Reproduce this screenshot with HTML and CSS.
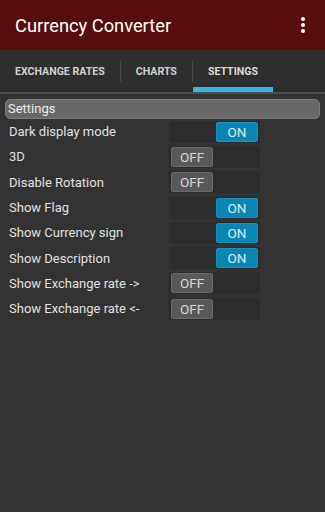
FILE: index.html
```html
<!DOCTYPE html>
<html lang="en">
<head>
    <meta charset="UTF-8">
    <meta name="viewport" content="width=device-width, initial-scale=1.0">
    <title>Currency Converter</title>
    <link rel="stylesheet" href="styles.css">
</head>
<body>

    <header class="appbar">
        <h1>Currency Converter</h1>
        <div class="menu-dots">
            <span></span><span></span><span></span>
        </div>
    </header>

    <nav class="tabs">
        <div class="tab">EXCHANGE RATES</div>
        <div class="sep"></div>
        <div class="tab">CHARTS</div>
        <div class="sep"></div>
        <div class="tab active">SETTINGS</div>
    </nav>

    <main class="settings">
        <div class="section-title">Settings</div>

        <div class="row">
            <span class="label">Dark display mode</span>
            <div class="switch on"><span class="knob">ON</span></div>
        </div>
        <div class="row">
            <span class="label">3D</span>
            <div class="switch"><span class="knob">OFF</span></div>
        </div>
        <div class="row">
            <span class="label">Disable Rotation</span>
            <div class="switch"><span class="knob">OFF</span></div>
        </div>
        <div class="row">
            <span class="label">Show Flag</span>
            <div class="switch on"><span class="knob">ON</span></div>
        </div>
        <div class="row">
            <span class="label">Show Currency sign</span>
            <div class="switch on"><span class="knob">ON</span></div>
        </div>
        <div class="row">
            <span class="label">Show Description</span>
            <div class="switch on"><span class="knob">ON</span></div>
        </div>
        <div class="row">
            <span class="label">Show Exchange rate -&gt;</span>
            <div class="switch"><span class="knob">OFF</span></div>
        </div>
        <div class="row">
            <span class="label">Show Exchange rate &lt;-</span>
            <div class="switch"><span class="knob">OFF</span></div>
        </div>
    </main>

</body>
</html>
```

FILE: styles.css
```css
body {
    font-family: Roboto, "Noto Sans", sans-serif;
    background-color: #333333;
    margin: 0;
    min-height: 100vh;
    color: #e2e2e2;
}

.appbar {
    height: 50px;
    background-color: #570d0d;
    display: flex;
    align-items: center;
    justify-content: space-between;
    padding: 0 15px;
}

.appbar h1 {
    margin: 0;
    font-size: 18.3px;
    font-weight: normal;
    color: #ffffff;
}

.menu-dots {
    display: flex;
    flex-direction: column;
    gap: 2px;
    margin-right: 5px;
}

.menu-dots span {
    width: 4px;
    height: 4px;
    border-radius: 50%;
    background-color: #ffffff;
}

.tabs {
    height: 42px;
    background-color: #2e2e2e;
    border-bottom: 2px solid #4f4f4f;
    display: flex;
    align-items: center;
}

.tab {
    height: 100%;
    box-sizing: border-box;
    padding: 0 15px;
    display: flex;
    align-items: center;
    font-size: 10.6px;
    font-weight: bold;
    color: #cfcfcf;
    border-bottom: 5px solid transparent;
    padding-top: 5px;
}

.tab.active {
    border-bottom-color: #33b5e5;
    color: #d8d8d8;
}

.sep {
    width: 1px;
    height: 21px;
    background-color: #484848;
}

.settings {
    padding: 5px 5px 0 5px;
}

.section-title {
    height: 18px;
    line-height: 18px;
    background-color: #686868;
    border: 1px solid #7c7c7c;
    border-radius: 5px;
    padding-left: 2px;
    font-size: 13px;
    color: #ececec;
}

.row {
    height: 25.3px;
    display: flex;
    align-items: center;
}

.label {
    width: 160px;
    padding-left: 4px;
    font-size: 13px;
    color: #e0e0e0;
}

.switch {
    width: 91px;
    height: 22px;
    box-sizing: border-box;
    padding: 1px 2px;
    background-color: #2c2c2c;
    display: flex;
    justify-content: flex-start;
}

.switch.on {
    justify-content: flex-end;
}

.knob {
    width: 42px;
    height: 20px;
    box-sizing: border-box;
    border: 1px solid #6a6a6a;
    border-radius: 2px;
    background-color: #595959;
    font-size: 13.5px;
    line-height: 18px;
    text-align: center;
    color: #d6d6d6;
}

.switch.on .knob {
    background-color: #0b86b3;
    border-color: #1893c0;
    color: #d8eaf1;
}
```
